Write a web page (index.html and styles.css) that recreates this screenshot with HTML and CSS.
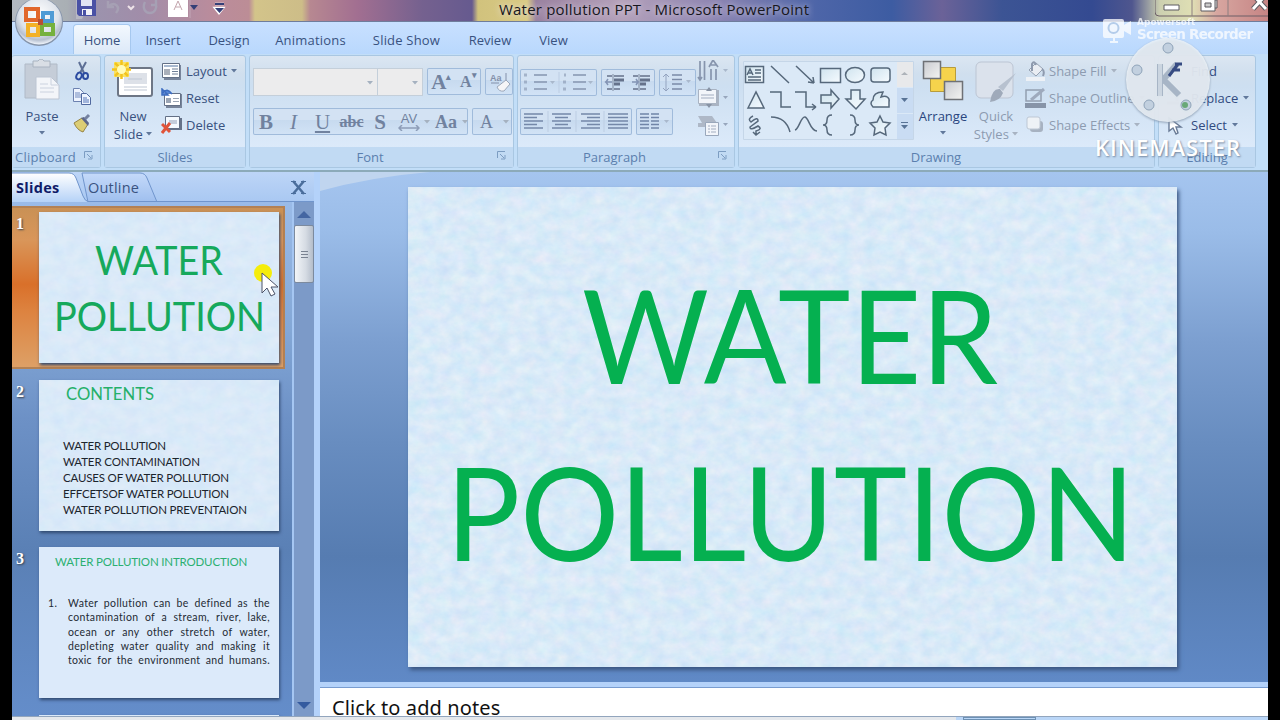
FILE: index.html
```
<!DOCTYPE html>
<html lang="en">
<head>
    <meta charset="UTF-8">
    <meta name="viewport" content="width=device-width, initial-scale=1.0">
    <title>Water pollution PPT - Microsoft PowerPoint</title>
    <link rel="stylesheet" href="styles.css">
</head>
<body>
    <!-- Shared gradients, icons and the paper texture -->
    <svg class="defs" width="0" height="0">
        <defs>
            <filter id="paper" x="0" y="0" width="100%" height="100%" color-interpolation-filters="sRGB">
                <feTurbulence type="fractalNoise" baseFrequency="0.07 0.09" numOctaves="5" seed="8"/>
                <feColorMatrix values="0.15 0 0 0 0.775  0.05 0.05 0 0 0.867  0 0 0.03 0 0.957  0 0 0 0 1"/>
            </filter>
            <linearGradient id="grey" x1="0" y1="0" x2="1" y2="1">
                <stop offset="0" stop-color="#c9cbd0"/><stop offset="1" stop-color="#f4f4f2"/>
            </linearGradient>
            <linearGradient id="shape" x1="0" y1="0" x2="1" y2="1">
                <stop offset="0" stop-color="#cfe3ee"/><stop offset="1" stop-color="#f6fbff"/>
            </linearGradient>
            <radialGradient id="orb" cx="50%" cy="35%" r="65%">
                <stop offset="0" stop-color="#fff"/><stop offset="0.65" stop-color="#dde2ea"/><stop offset="0.85" stop-color="#b6c0d0"/><stop offset="1" stop-color="#f2f6fc"/>
            </radialGradient>
            <symbol id="caret" viewBox="0 0 6 4"><path d="M0 0h6L3 3.6z"/></symbol>
            <symbol id="launcher" viewBox="0 0 9 9">
                <path d="M.5 7V.5H8M3 3l4 4M8 4v4H4" fill="none" stroke="#7c9dc2"/>
            </symbol>
        </defs>
    </svg>

    <div class="window">
        <!-- Title bar with quick access toolbar -->
        <header class="titlebar">
            <svg class="quick-access" width="160" height="22" viewBox="0 0 160 22">
                <path d="M0 0h6c4 7 3 13 0 19H0z" fill="#c5c6cf" opacity=".6"/>
                <path d="M1 0h19v16H3l-2-2z" fill="#4a51a5"/><path d="M5 0h11v6H5z" fill="#e2e4f4"/><path d="M6 9h10v6H6z" fill="#f2f2f8"/><path d="M7 10h3v5H7z" fill="#4a51a5"/>
                <path d="M32 1v6h6M33 6c6-5 12 1 7 7" fill="none" stroke="#a6a0b4" stroke-width="2.4"/>
                <path d="M52 6l3 3 3-3" fill="none" stroke="#eee3e8" stroke-width="2"/>
                <path d="M80 0v5h-5M69 2c-3 6 0 11 5 11s7-5 6-9" fill="none" stroke="#a6a0b4" stroke-width="2.4"/>
                <path d="M92 0h20v17H92z" fill="#fff"/><path d="M98 10l4-9 4 9M99.500 7h5" fill="none" stroke="#c3a5ad"/>
                <path d="M114 0v18" stroke="#d9ccd6" opacity=".4"/><path d="M114 5h8l-4 5z" fill="#343f77"/>
                <path d="M139 4h9M139 8h8l-4 5z" stroke="#fff" stroke-width="2.500"/><path d="M139 4h9" stroke="#343f77" stroke-width="2"/><path d="M139 8h9l-4.500 5z" fill="#343f77"/>
            </svg>
            <h1 class="title">Water pollution PPT - Microsoft PowerPoint</h1>
            <svg class="window-buttons" width="113" height="22" viewBox="0 0 113 22">
                <path d="M0 0v12q0 4 4 4h109" fill="none" stroke="#6d5f66"/><path d="M37 0v16M73 0v16" stroke="#8d7f80"/>
                <path d="M9 5h15v5H9z" fill="#fff" stroke="#5d5a60"/>
                <path d="M50 0h12v8H50z" fill="#ddd" stroke="#5d5a60"/><path d="M46 -2h14v13H46z" fill="#fff" stroke="#5d5a60"/><path d="M50 3h6v4h-6z" fill="#ccc" stroke="#5d5a60"/>
                <path d="M99 -4l12 13M110 -4l-12 13" stroke="#5d5a60" stroke-width="5"/><path d="M99 -4l12 13M110 -4l-12 13" stroke="#fff" stroke-width="3"/>
            </svg>
        </header>

        <!-- Ribbon tabs -->
        <nav class="tabs">
            <a class="tab active">Home</a>
            <a class="tab insert">Insert</a>
            <a class="tab design">Design</a>
            <a class="tab animations">Animations</a>
            <a class="tab show">Slide Show</a>
            <a class="tab review">Review</a>
            <a class="tab view">View</a>
        </nav>

        <!-- Ribbon groups -->
        <section class="ribbon">
            <div class="group clipboard">
                <div class="group-body">
                    <div class="big-button">
                        <svg width="38" height="44" viewBox="0 0 38 44"><path d="M2 5h32v34H2z" fill="#c5cdd8" stroke="#b0bac7"/><path d="M10 2h5q3-4 6 0h6v6H10z" fill="#d9dee5" stroke="#a9b3c0"/><path d="M13 18h15l8 8v14H13z" fill="#f3f5f9" stroke="#bcc5d3"/><path d="M28 18v8h8M17 25h8M17 29h14M17 33h14" fill="none" stroke="#cbd2df"/></svg>
                        <span>Paste</span>
                        <svg class="caret"><use href="#caret"/></svg>
                    </div>
                    <div class="icon-column">
                        <svg width="20" height="20" viewBox="0 0 20 20"><path d="M7 1l5 11M14 1L8 12" stroke="#5d6f95" stroke-width="2"/><ellipse cx="7" cy="15" rx="2.500" ry="3.500" transform="rotate(25 7 15)" fill="none" stroke="#2c4ba0" stroke-width="2"/><ellipse cx="13.500" cy="15" rx="2.500" ry="3" fill="none" stroke="#2c4ba0" stroke-width="2"/></svg>
                        <svg width="20" height="20" viewBox="0 0 20 20"><path d="M1.500 1.500h6l4 4v9h-10z" fill="#eef4ff" stroke="#6d82b0"/><path d="M3 6h5M3 8h6M3 10h6" stroke="#7089bd"/><path d="M9.500 6.500h5l4 4v7h-9z" fill="#eef4ff" stroke="#51699f"/><path d="M11 11h4M11 13h6M11 15h6" stroke="#5677b9"/></svg>
                        <svg width="20" height="20" viewBox="0 0 20 20"><path d="M2 10l8-5 6 6-5 8q-6-2-9-9z" fill="#dccd74" stroke="#968343"/><path d="M9 5l3-1 5 6-1 3z" fill="#5d6688"/><path d="M13 6l4-4" stroke="#7481a0" stroke-width="3"/></svg>
                    </div>
                </div>
                <div class="group-label">Clipboard<svg class="launcher"><use href="#launcher"/></svg></div>
            </div>

            <div class="group slides">
                <div class="group-body">
                    <div class="big-button">
                        <svg width="44" height="44" viewBox="0 0 44 44"><rect x="7" y="9" width="34" height="28" rx="2" fill="#fff" stroke="#6d7685" stroke-width="2"/><path d="M13 14h23v11H13z" fill="#dde1e8"/><path d="M17 20h14M13 28h23M13 31h23" stroke="#bfc7d3"/><path d="M3 3h15v15H3z" fill="#f9e264"/><path d="M10.500 1v19M1 10.500h19M4 4l13 13M17 4L4 17" stroke="#f3c41e" stroke-width="2.500"/><circle cx="10.500" cy="10.500" r="4.500" fill="#fffbb8"/></svg>
                        <span>New</span>
                        <span>Slide <svg class="caret"><use href="#caret"/></svg></span>
                    </div>
                    <div class="row-buttons">
                        <div><svg width="21" height="20" viewBox="0 0 21 20"><path d="M3 4h17v15H3z" fill="#77849a"/><path d="M1.500 2.500h17v14h-17z" fill="#fff" stroke="#637086"/><path d="M3 4h14v2H3z" fill="#a8b9d0"/><path d="M3 8h6v6H3z" fill="#aab0ba"/><path d="M11 8h6M11 10.500h6M11 13h6" stroke="#708097"/></svg>Layout <svg class="caret"><use href="#caret"/></svg></div>
                        <div><svg width="21" height="20" viewBox="0 0 21 20"><path d="M5 6h16v14H5z" fill="#77849a"/><path d="M3.500 5.500h16v12h-16z" fill="#fff" stroke="#637086"/><path d="M5 10h5v5H5zM12 10h6v1h-6zM12 13h6v1h-6z" fill="#9aa5b5"/><path d="M1 1v6h6zM2 5q4-6 9 1" fill="#5587d8" stroke="#3c6cc0" stroke-width="1.500"/></svg>Reset</div>
                        <div><svg width="21" height="20" viewBox="0 0 21 20"><path d="M5 3h16v12H5z" fill="#657289"/><path d="M4.500 1.500h14v12h-14z" fill="#f5faff" stroke="#637086"/><path d="M8 5h8v4H8z" fill="#c4cddb"/><path d="M1 9l8 8M9 8l-8 10" stroke="#e0543a" stroke-width="3"/></svg>Delete</div>
                    </div>
                </div>
                <div class="group-label">Slides</div>
            </div>

            <div class="group font">
                <div class="group-body stacked">
                    <div class="tool-row">
                        <div class="combo name"><svg class="caret dim"><use href="#caret"/></svg></div><div class="combo size"><svg class="caret dim"><use href="#caret"/></svg></div>
                        <div class="tools grow"><b class="large">A<sup>▴</sup></b><b class="small">A<sup>▾</sup></b></div>
                        <div class="tools clear"><svg width="26" height="24" viewBox="0 0 26 24"><text x="4" y="11" class="clear-text">Aa</text><path d="M20 3v8M5 13h8" stroke="#8390aa"/><path d="M11 17l9-7 4 4-6 7q-5 1-7-4z" fill="#f5f5f7" stroke="#9ba7ba"/></svg></div>
                    </div>
                    <div class="tool-row">
                        <div class="tools styles"><b>B</b><i>I</i><u>U</u><s>abc</s><b>S</b><span class="av">AV<svg width="22" height="6" viewBox="0 0 22 6"><path d="M1 3h20M4 0L1 3l3 3M18 0l3 3-3 3" fill="none" stroke="#8d9db8" stroke-width="1.500"/></svg></span><svg class="caret dim"><use href="#caret"/></svg><b class="aa">Aa</b><svg class="caret dim"><use href="#caret"/></svg></div>
                        <div class="tools color"><span>A</span><svg class="caret dim"><use href="#caret"/></svg></div>
                    </div>
                </div>
                <div class="group-label">Font<svg class="launcher"><use href="#launcher"/></svg></div>
            </div>

            <div class="group paragraph">
                <div class="group-body">
                    <div class="stacked">
                        <div class="tool-row">
                            <svg class="tools" width="77" height="27" viewBox="0 0 77 27"><path d="M14 6h13M14 13h13M14 20h13M53 6h13M53 13h13M53 20h13" stroke="#8595b0" stroke-width="1.400"/><path d="M4 6h3M4 13h3M4 20h3M44 6h2M43 13h3M43 20h3" stroke="#8595b0" stroke-width="3" opacity=".6"/><path d="M39 3v21" stroke="#bccde3"/><path d="M30 12h5l-2.500 3zM68 12h5l-2.500 3z" fill="#a9b8cc"/></svg>
                            <svg class="tools" width="54" height="27" viewBox="0 0 54 27"><path d="M6 7h5M13 7h10M13 11h10M6 20h5M13 20h6M32 7h5M39 7h10M39 11h10M32 20h5M39 20h6" stroke="#65728b" stroke-width="1.500"/><path d="M13 11h10M13 15h6M39 11h10M39 15h6" stroke="#65728b" stroke-width="3"/><path d="M12 5v17M38 5v17" stroke="#7c899e"/><path d="M11 13H5l2-3M11 13H5l2 3M31 13h6l-2-3M31 13h6l-2 3" fill="none" stroke="#8394b4" stroke-width="1.500"/></svg>
                            <svg class="tools" width="37" height="27" viewBox="0 0 37 27"><path d="M13 6h10M13 10.500h10M13 15h10M13 20h10" stroke="#7b8ba8" stroke-width="1.400"/><path d="M7 5v17M4 8l3-3 3 3M4 19l3 3 3-3" fill="none" stroke="#93a3bf"/><path d="M27 11h5l-2.500 3z" fill="#a9b8cc"/></svg>
                        </div>
                        <div class="tool-row">
                            <svg class="tools" width="112" height="27" viewBox="0 0 112 27"><path d="M4 6h19M4 9.500h13M4 13h19M4 16.500h13M4 20h19M32 6h19M35 9.500h13M32 13h19M35 16.500h13M32 20h19M61 6h19M67 9.500h13M61 13h19M67 16.500h13M61 20h19M88 6h20M88 9.500h20M88 13h20M88 16.500h20M88 20h20" stroke="#7488a9" stroke-width="1.500"/><path d="M28 3v21M56 3v21M84 3v21" stroke="#bccde3"/></svg>
                            <svg class="tools" width="37" height="27" viewBox="0 0 37 27"><path d="M4 6h9M15 6h8M4 9.500h9M15 9.500h8M4 13h9M15 13h8M4 16.500h9M15 16.500h8M4 20h9M15 20h8" stroke="#7085a8" stroke-width="1.500"/><path d="M28 12h5l-2.500 3z" fill="#a9b8cc"/></svg>
                        </div>
                    </div>
                    <div class="icon-column">
                        <svg width="32" height="22" viewBox="0 0 32 22"><path d="M3 1v19M7.500 1v19M1 17l2 3 2-3M12 7l4-7 5 7M14 5h5M14 9v11M19 9v11" fill="none" stroke="#8795ad" stroke-width="1.700"/><path d="M26 9h5l-2.500 3z" fill="#a9b8cc"/></svg>
                        <svg width="32" height="22" viewBox="0 0 32 22"><path d="M2 3h20v16H2z" fill="#aab4c3"/><path d="M1.500 2.500h18v14h-18z" fill="#f2f5fa" stroke="#a9b3c2"/><path d="M4 8h13M4 11h13" stroke="#a2adc0"/><path d="M12 0l3 4H9zM12 21l3-4H9z" fill="#8793a5"/><path d="M26 9h5l-2.500 3z" fill="#97a6bc"/></svg>
                        <svg width="32" height="22" viewBox="0 0 32 22"><path d="M1 2h14l5 7H5zM1 9h8v4H1z" fill="#aeb8c7"/><path d="M8.500 8.500h13v13h-13z" fill="#f2f5fa" stroke="#99a7bb"/><path d="M11 12h2M14 12h5M11 15h2M14 15h5M11 18h2M14 18h5" stroke="#a2adc0"/><path d="M26 9h5l-2.500 3z" fill="#97a6bc"/></svg>
                    </div>
                </div>
                <div class="group-label">Paragraph<svg class="launcher"><use href="#launcher"/></svg></div>
            </div>

            <div class="group drawing">
                <div class="group-body">
                    <!-- Shape gallery: three rows of six, with its scroll buttons -->
                    <svg class="gallery" width="171" height="79" viewBox="0 0 171 79">
                        <path d="M.5.5h170v78H.5z" fill="#dbe9f7" stroke="#c5d6e8"/>
                        <g fill="url(#shape)" stroke="#56687b" stroke-width="1.500">
                            <path d="M2.500 5.500h18v16h-18z"/><path d="M4 14l3-6 3 6M5 12h4M12 9h6M12 12h6M5 16h13M5 19h13"/>
                            <path d="M28 5l18 17M53 5l18 17M71 22l-1-6M71 22l-6-1" fill="none"/>
                            <path d="M77.500 7.500h20v14h-20z"/><ellipse cx="112" cy="14" rx="9.500" ry="7.500"/><rect x="128" y="7" width="19" height="14" rx="3"/>
                            <path d="M5 47l8-16 8 16z"/><path d="M27 31h11v15h10M52 31h11v15h9M73 46l-4-3M73 46l-4 3" fill="none"/>
                            <path d="M78 34h10v-5l8 9-8 9v-5H78zM108 29h9v9h5l-9 10-10-10h5z"/><path d="M130 39c0-6 4-8 10-8l-2 5c6-2 9 1 8 5v5h-16q-4-4 0-7z"/>
                            <path d="M10 55q-6 3-2 6 7-6 7-1l-8 6q0 4 8-1 5 3-2 5v4M10 71l3 3 4-3M28 56q15 0 19 15M52 69c4-1 6-14 10-13s5 14 12 14M89 54q-5 0-5 5 0 5-4 5 4 0 4 5t5 5M107 54q5 0 5 5 0 5 4 5-4 0-4 5t-5 5" fill="none"/>
                            <path d="M137 55l3 6 7 1-5 5 1 7-6-3-6 3 1-7-5-5 7-1z"/>
                        </g>
                        <path d="M154 1h16v25h-16z" fill="#e8e9eb"/><path d="M154 27h16v25h-16zM154 53h16v25h-16z" fill="#c9dcf3"/>
                        <path d="M158 14h7l-3.500-3z" fill="#aeb3ba"/><path d="M158 37h7l-3.500 4zM158 64h7l-3.500 4zM158 61h7v1h-7z" fill="#587396"/>
                    </svg>
                    <div class="big-button arrange">
                        <svg width="42" height="44" viewBox="0 0 42 44"><path d="M8.500 8.500h25v24h-25z" fill="#f6d34c" stroke="#b89c3b"/><path d="M1.500 2.500h17v17h-17z" fill="url(#grey)" stroke="#6e7176" stroke-width="1.500"/><path d="M22.500 22.500h18v18h-18z" fill="url(#grey)" stroke="#6e7176" stroke-width="1.500"/></svg>
                        <span>Arrange</span>
                        <svg class="caret"><use href="#caret"/></svg>
                    </div>
                    <div class="big-button quick disabled">
                        <svg width="42" height="44" viewBox="0 0 42 44"><rect x="1" y="3" width="37" height="36" rx="5" fill="#dbe2ec" stroke="#bcc5d3"/><path d="M41 14L28 32l-5-4z" fill="#b7c1cf"/><path d="M15 43q2-14 10-13l3 4q-3 8-13 9z" fill="#9faaba"/></svg>
                        <span>Quick</span>
                        <span>Styles <svg class="caret"><use href="#caret"/></svg></span>
                    </div>
                    <div class="row-buttons disabled">
                        <div><svg width="22" height="20" viewBox="0 0 22 20"><path d="M2 16h19v4H2z" fill="#edf1f6"/><path d="M5 9l7-7 7 6-7 7z" fill="#e9edf3" stroke="#95a1b2"/><path d="M8 10V3q2-4 4 1M18 8q3 2 1 7" fill="none" stroke="#8e9aae" stroke-width="2"/></svg>Shape Fill <svg class="caret"><use href="#caret"/></svg></div>
                        <div><svg width="22" height="20" viewBox="0 0 22 20"><path d="M1 15h21v5H1z" fill="#8794a8"/><path d="M2 2h15v11H2z" fill="none" stroke="#929eb0" stroke-width="1.500"/><path d="M7 12L20 1" stroke="#9eaabd" stroke-width="3"/></svg>Shape Outline <svg class="caret"><use href="#caret"/></svg></div>
                        <div><svg width="22" height="20" viewBox="0 0 22 20"><rect x="6" y="6" width="13" height="11" rx="3" fill="#a7b2c1"/><rect x="3" y="2" width="13" height="12" rx="2" fill="#eef2f6" stroke="#bdc7d4"/></svg>Shape Effects <svg class="caret"><use href="#caret"/></svg></div>
                    </div>
                </div>
                <div class="group-label">Drawing</div>
            </div>

            <div class="group editing">
                <div class="group-body">
                    <div class="row-buttons">
                        <div><svg width="28" height="20" viewBox="0 0 28 20"><path d="M7 17L16 3" stroke="#2d4d91" stroke-width="5"/><path d="M8 8h12" stroke="#526da7" stroke-width="3"/></svg>Find</div>
                        <div><svg width="28" height="20" viewBox="0 0 28 20"><path d="M8 5h7M8 15h12M18 4v9" stroke="#a9b6c9" stroke-width="3"/></svg>Replace <svg class="caret"><use href="#caret"/></svg></div>
                        <div><svg width="28" height="20" viewBox="0 0 28 20"><path d="M10 3v13l4-3 3 6 2-1-2-6h5z" fill="#fff" stroke="#697b96" stroke-width="1.400"/></svg>Select <svg class="caret"><use href="#caret"/></svg></div>
                    </div>
                </div>
                <div class="group-label">Editing</div>
            </div>
        </section>

        <main class="workspace">
            <!-- Slides pane -->
            <aside class="pane">
                <div class="pane-tabs">
                    <svg class="pane-shape" width="302" height="30" viewBox="0 0 302 30"><defs><linearGradient id="tabFill" x2="0" y2="1"><stop offset="0" stop-color="#c5dafa"/><stop offset="1" stop-color="#9fbfee"/></linearGradient><linearGradient id="activeFill" x2="0" y2="1"><stop offset="0" stop-color="#fff"/><stop offset="1" stop-color="#b5d2f7"/></linearGradient></defs><path d="M70 1h58q5 0 7 5l10 24H76z" fill="url(#tabFill)" stroke="#7095cc"/><path d="M0 1h57q5 0 7 5l7 18q2 5 5 6H0z" fill="url(#activeFill)"/><path d="M0 1h57q5 0 7 5l7 18q2 5 5 5.500h226" fill="none" stroke="#7095cc"/></svg>
                    <b>Slides</b><span>Outline</span>
                    <svg class="close" width="15" height="15" viewBox="0 0 15 15"><path d="M2 1l11 13M13 1L2 14" stroke="#4a6d9b" stroke-width="2.500"/><path d="M0 1.500h5M10 1.500h5M0 13.500h5M10 13.500h5" stroke="#4a6d9b"/></svg>
                </div>
                <div class="pane-body">
                    <div class="slide-list">
                        <div class="slide-item selected">
                            <span class="number">1</span>
                            <svg class="thumb" viewBox="0 0 240 151"><rect width="240" height="151" filter="url(#paper)" opacity=".5"/><g class="heading"><text x="56" y="63" textLength="128" lengthAdjust="spacingAndGlyphs">WATER</text><text x="15" y="119" textLength="211" lengthAdjust="spacingAndGlyphs">POLLUTION</text></g></svg>
                        </div>
                        <div class="slide-item">
                            <span class="number">2</span>
                            <svg class="thumb" viewBox="0 0 240 151"><rect width="240" height="151" filter="url(#paper)" opacity=".5"/><text class="contents-title" x="27" y="20" textLength="88" lengthAdjust="spacingAndGlyphs">CONTENTS</text><g class="contents"><text x="24" y="70" textLength="103">WATER POLLUTION</text><text x="24" y="86" textLength="137">WATER CONTAMINATION</text><text x="24" y="102" textLength="166">CAUSES OF WATER POLLUTION</text><text x="24" y="118" textLength="166">EFFCETSOF WATER POLLUTION</text><text x="24" y="134" textLength="184">WATER POLLUTION PREVENTAION</text></g></svg>
                        </div>
                        <div class="slide-item">
                            <span class="number">3</span>
                            <div class="thumb intro">
                                <h2>WATER POLLUTION INTRODUCTION</h2>
                                <div class="intro-text">
                                    <span>1.</span>
                                    <p>Water pollution can be defined as the<br>contamination of a stream, river, lake,<br>ocean or any other stretch of water,<br>depleting water quality and making it<br>toxic for the environment and humans.</p>
                                </div>
                            </div>
                        </div>
                        <div class="slide-item"><span class="number"></span><div class="thumb"></div></div>
                    </div>
                    <div class="scrollbar">
                        <svg width="14" height="8" viewBox="0 0 14 8"><path d="M0 8l7-7 7 7z" fill="#4466a2"/></svg>
                        <div class="scroll-thumb"><i></i><i></i><i></i></div>
                        <svg class="down" width="14" height="8" viewBox="0 0 14 8"><path d="M0 0l7 7 7-7z" fill="#345b9f"/></svg>
                    </div>
                </div>
            </aside>

            <!-- Slide editor with notes below -->
            <section class="editor">
                <div class="stage">
                    <svg class="glare" width="110" height="20" viewBox="0 0 110 20"><path d="M0 0h110Q50 5 0 19z" fill="#c0d5ef"/></svg>
                    <svg class="slide" viewBox="0 0 769 480"><rect width="769" height="480" filter="url(#paper)"/><g class="heading"><text x="174" y="197" textLength="416" lengthAdjust="spacingAndGlyphs">WATER</text><text x="38" y="374" textLength="689" lengthAdjust="spacingAndGlyphs">POLLUTION</text></g></svg>
                </div>
                <div class="notes">Click to add notes</div>
            </section>
        </main>
        <footer class="status"><span></span><i></i></footer>

        <!-- Office button -->
        <svg class="office" width="50" height="48" viewBox="0 0 50 48">
            <circle cx="25" cy="22" r="24" fill="#8594aa"/><circle cx="25" cy="21.500" r="23" fill="url(#orb)"/>
            <g fill="none" stroke-width="4">
                <path d="M12 9h12v11H12z" stroke="#e1672c"/><path d="M29 13h9v8h-9z" stroke="#4f9bd5"/>
                <path d="M14 25h10v10H14z" stroke="#f3b127"/><path d="M28 25h11v9H28z" stroke="#75b13e"/>
            </g>
            <path d="M24 19h5v6h-5z" fill="#b94f35"/>
        </svg>

        <!-- Pointer with click highlight -->
        <svg class="pointer" width="30" height="38" viewBox="0 0 30 38"><circle cx="11" cy="10" r="9" fill="#f5ed0b"/><path d="M10 10v20l5-5 4 8 4-2-4-7h7z" fill="#fff" stroke="#4b5268"/></svg>

        <!-- Recorder watermark -->
        <div class="recorder">
            <svg width="29" height="25" viewBox="0 0 29 25"><path d="M2 1h17q2 0 2 2v4l7-4v14l-7-4v5q0 2-2 2H2q-2 0-2-2V3q0-2 2-2z" fill="#fff"/><circle cx="10.500" cy="10" r="5" fill="none" stroke="#afc7e4" stroke-width="2"/><path d="M7 24h8M11 20v4" stroke="#fff" stroke-width="2"/></svg>
            <p><small>Apowersoft</small>Screen Recorder</p>
        </div>

        <!-- Editor watermark -->
        <div class="kinemaster">
            <svg width="86" height="84" viewBox="0 0 86 84"><circle cx="43" cy="42" r="42" fill="#f3f7fb" opacity=".8"/><g fill="#c2d0df" stroke="#8fa3b9"><circle cx="43" cy="10" r="5"/><circle cx="12" cy="32" r="5"/><circle cx="24" cy="67" r="5"/><circle cx="61" cy="67" r="5"/></g><circle cx="60" cy="67" r="3" fill="#69a878"/><path d="M35 26v32M36 44l16-18M39 42l15 15" stroke="#a7b5c6" stroke-width="6" fill="none"/><path d="M35 26v32" stroke="#cbd5e0" stroke-width="4"/><path d="M44 38l9-12M50 26h7M47 32h8" stroke="#364b82" stroke-width="3"/></svg>
            <span>KINEMASTER</span>
        </div>
    </div>
</body>
</html>
```
FILE: styles.css
```
/* Reset */
* {
    margin: 0;
    padding: 0;
    box-sizing: border-box;
}

body {
    width: 1280px;
    height: 720px;
    padding: 0 12px;
    background: #000;
    overflow: hidden;
    font-family: "Open Sans", "Noto Sans", sans-serif;
    font-size: 13px;
    color: #39527f;
}

svg {
    display: block;
    flex-shrink: 0;
}

.defs {
    position: absolute;
}

.window {
    position: relative;
    width: 1256px;
    height: 720px;
    overflow: hidden;
    background: #bfdbff;
    display: flex;
    flex-direction: column;
}

/* Title bar: blurred glass over the desktop wallpaper */
.titlebar {
    height: 22px;
    padding-left: 64px;
    display: flex;
    border-bottom: 1px solid #6f7d9c;
    background: linear-gradient(90deg, #b3b9c1 0, #a9afb4 55px, #9b94ae 75px, #a18da9 130px, #ba8c9c 200px, #bc8d96 237px, #d3c48a 243px, #cdbd88 290px, #b78891 298px, #a26f91 345px, #75618f 410px, #665a8f 460px, #d1c27d 466px, #d9ca84 515px, #9a82a0 524px, #b4a1ba 610px, #8f86b2 700px, #4d65a8 805px, #3d5ca2 880px, #6b6298 930px, #3c5494 990px, #344a91 1080px, #4f568e 1120px, #cdd0b0 1148px, #dfdfb4 1180px, #d7a6a0 1205px, #c68484 1256px);
}

.title {
    flex: 1;
    margin-left: 263px;
    font-size: 15px;
    font-weight: 400;
    line-height: 18px;
    letter-spacing: 0.2px;
    color: #17171d;
    white-space: nowrap;
    text-shadow: 0 0 6px #e8e2ef;
}

/* Ribbon tabs */
.tabs {
    height: 32px;
    padding-left: 61px;
    display: flex;
    align-items: flex-end;
    background: linear-gradient(#c8e0ff, #b9d8fd);
}

.tab {
    width: 62px;
    height: 30px;
    line-height: 32px;
    text-align: center;
    white-space: nowrap;
}

.tab.active {
    width: 58px;
    line-height: 31px;
    background: linear-gradient(#f3f8fe, #dce9f8);
    border: 1px solid #a6c8ef;
    border-bottom: 0;
    border-radius: 4px 4px 0 0;
}

.tab.insert { width: 64px; }
.tab.design { width: 68px; }
.tab.animations { width: 95px; letter-spacing: 0.2px; }
.tab.show { width: 97px; letter-spacing: 0.2px; }
.tab.review { width: 70px; }
.tab.view { width: 57px; }

/* Ribbon */
.ribbon {
    height: 118px;
    padding: 1px 0 2px;
    display: flex;
    gap: 3px;
    background: #c2def8;
    border-bottom: 2px solid #8caab9;
}

.group {
    height: 113px;
    display: flex;
    flex-direction: column;
    border: 1px solid #a9c7e2;
    border-radius: 3px;
    background: linear-gradient(#dbe6f2 0, #d0dfee 18px, #cddff1 30px, #dceafa 92px);
}

.clipboard { width: 89px; border-left: 0; }
.slides { width: 142px; }
.font { width: 265px; }
.paragraph { width: 218px; }
.drawing { width: 417px; }
.editing { width: 98px; }

.group-body {
    height: 91px;
    padding-top: 1px;
    display: flex;
}

.group-label {
    height: 20px;
    position: relative;
    line-height: 21px;
    text-align: center;
    background: #c1daf3;
    color: #5b7fae;
}

.clipboard .group-label {
    padding-right: 21px;
    letter-spacing: 0.2px;
}

.paragraph .group-label {
    padding-right: 23px;
}

.drawing .group-label {
    padding-right: 21px;
}

.font .group-label {
    padding-right: 23px;
}

.launcher {
    position: absolute;
    right: 7px;
    top: 4px;
    width: 9px;
    height: 9px;
}

.caret {
    display: inline-block;
    width: 6px;
    height: 4px;
    fill: #61789b;
    vertical-align: 3px;
}

.caret.dim {
    fill: #a5b1c0;
}

.big-button {
    width: 60px;
    display: flex;
    flex-direction: column;
    align-items: center;
    line-height: 18px;
    padding-top: 2px;
    white-space: nowrap;
}

.big-button > span {
    padding-top: 4px;
    margin-bottom: -4px;
}

.big-button > .caret {
    margin-top: 10px;
}

.icon-column {
    display: flex;
    flex-direction: column;
    gap: 6px;
    padding-top: 4px;
}

.row-buttons > div {
    height: 27px;
    display: flex;
    align-items: center;
    gap: 4px;
    white-space: nowrap;
}

.disabled {
    color: #8d9bb0;
}

.disabled .caret {
    fill: #a8b3c2;
}

.slides .big-button {
    width: 56px;
}

/* Font group */
.stacked {
    display: flex;
    flex-direction: column;
    padding-top: 11px;
    gap: 12px;
}

.font .stacked {
    padding: 12px 0 0 3px;
    gap: 13px;
}

.tool-row {
    display: flex;
    gap: 4px;
    height: 27px;
}

.combo {
    height: 28px;
    padding: 12px 4px 0 0;
    text-align: right;
    line-height: 4px;
    border: 1px solid #c4cfda;
    background: #ececed;
}

.combo.name { width: 125px; margin-right: -5px; }
.combo.size { width: 46px; }

.tools {
    display: flex;
    align-items: center;
    height: 27px;
    box-shadow: inset 0 0 0 1px #a0bbdb;
    border-radius: 2px;
    font-family: "Liberation Serif", serif;
    font-size: 21px;
    line-height: 24px;
    color: #71829f;
    background: linear-gradient(#d3e2f3 45%, #c7daef 45%, #d2e3f6);
}

svg.tools {
    display: block;
}

.tools.grow { width: 54px; justify-content: space-around; }
.tools.clear { width: 28px; padding-left: 1px; }
.tools.color { width: 40px; padding-left: 8px; gap: 10px; font-size: 18px; }

.tools sup {
    font-size: 9px;
    line-height: 1px;
    vertical-align: 9px;
}

.tools .small {
    font-size: 16px;
}

.clear-text {
    font: bold 9px "Liberation Sans", sans-serif;
    fill: #8390aa;
}

.tools.styles {
    width: 215px;
    display: grid;
    grid-template-columns: 26px 29px 29px 29px 28px 30px 6px 32px 5px;
    justify-items: center;
}

.tools.styles s {
    font-size: 16px;
    font-weight: bold;
}

.tools.styles .caret {
    align-self: center;
}

.tools .av {
    font: 13px/13px "Liberation Sans", sans-serif;
    text-align: center;
}

.tools .aa {
    font-size: 18px;
}

/* Paragraph group */
.paragraph .group-body {
    padding-left: 2px;
}

.paragraph .stacked {
    width: 177px;
    padding-top: 12px;
}

.paragraph .icon-column {
    padding-top: 3px;
    gap: 5px;
}

/* Drawing group */
.drawing .group-body {
    padding-left: 4px;
}

.gallery {
    margin-top: 4px;
}

.arrange {
    width: 57px;
    padding-left: 1px;
}

.arrange span {
    color: #29457e;
}

.quick {
    width: 50px;
}

.drawing .row-buttons > div {
    gap: 3px;
}

.drawing .row-buttons {
    padding-left: 3px;
}

.drawing .row-buttons svg:last-child,
.editing .row-buttons .caret {
    margin-left: 1px;
}

.editing .row-buttons {
    color: #314b80;
}

/* Work area */
.workspace {
    height: 544px;
    display: flex;
    background: #b4d2fa;
}

.pane {
    width: 302px;
    display: flex;
    flex-direction: column;
}

.pane-tabs {
    height: 30px;
    position: relative;
    display: flex;
    align-items: center;
    padding-top: 1px;
    background: linear-gradient(#bdd5f7, #a9c8f2);
}

.pane-shape {
    position: absolute;
    left: 0;
    top: 0;
}

.pane-tabs b,
.pane-tabs span,
.pane-tabs .close {
    position: relative;
}

.pane-tabs b {
    width: 76px;
    padding-left: 4px;
    color: #101b68;
    font-size: 14.5px;
    letter-spacing: 0.3px;
}

.pane-tabs span {
    flex: 1;
    font-size: 14.5px;
    letter-spacing: 0.2px;
}

.pane-tabs .close {
    margin-right: 8px;
}

.pane-body {
    flex: 1;
    display: flex;
    overflow: hidden;
    background: linear-gradient(#9abbe8, #83a7d6 25%, #6d91c6 42%, #5a80b5 68%, #648dca);
}

.slide-list {
    flex: 1;
    padding-top: 4px;
}

.slide-item {
    width: 273px;
    height: 163px;
    margin-bottom: 4.5px;
    padding-top: 6px;
    display: flex;
}

.slide-item.selected {
    background: linear-gradient(#c99155, #d9965a 20%, #d9702a 48%, #dd8340 65%, #dda066);
    border: solid #b38153;
    border-width: 2px 2px 2px 0;
    padding-top: 4px;
}

.number {
    width: 27px;
    padding: 3px 0 0 4px;
    font: bold 16px "Liberation Serif", serif;
    color: #fff;
    text-shadow: 1px 1px 2px #39404b;
}

.thumb {
    width: 240px;
    height: 151px;
    flex-shrink: 0;
    background: #dceafa;
    box-shadow: 1px 2px 3px #30496f;
}

/* Slide text */
.heading {
    font-family: Lato, sans-serif;
    font-size: 129px;
    fill: #05b050;
}

.thumb .heading {
    font-size: 41px;
    fill: #16a95c;
}

.contents-title {
    font: 17px Lato, sans-serif;
    fill: #24b06a;
}

.contents {
    font: 11.5px Lato, sans-serif;
    fill: #1c242c;
}

.intro {
    padding: 8px 9px 0 16px;
    font-family: Lato, sans-serif;
}

.intro h2 {
    font-size: 11.5px;
    font-weight: 400;
    line-height: 14px;
    color: #2bb071;
    white-space: nowrap;
    letter-spacing: -0.17px;
}

.intro-text {
    display: flex;
    margin: 27px 0 0 -7px;
    font-size: 10.5px;
    letter-spacing: 0.35px;
    line-height: 14.3px;
    color: #242b34;
}

.intro-text span {
    width: 20px;
}

.intro-text p {
    width: 202px;
    text-align: justify;
    text-align-last: justify;
    white-space: nowrap;
}

/* Slides pane scrollbar */
.scrollbar {
    width: 22px;
    display: flex;
    flex-direction: column;
    align-items: center;
    padding: 8px 0 1px;
    border-left: 2px solid #a5c6f2;
    background: #7c9ac8;
}

.scroll-thumb {
    width: 20px;
    height: 58px;
    margin-top: 7px;
    display: flex;
    flex-direction: column;
    align-items: center;
    justify-content: center;
    gap: 2px;
    border: 1px solid #7c8a9e;
    border-radius: 2px;
    background: linear-gradient(90deg, #f2f5f8, #d5dbe3 60%, #b4bdca);
}

.scroll-thumb i {
    width: 7px;
    height: 1px;
    background: #798291;
}

.scrollbar .down {
    margin-top: auto;
    margin-bottom: 5px;
}

/* Editor */
.editor {
    flex: 1;
    margin-left: 6px;
    display: flex;
    flex-direction: column;
}

.stage {
    position: relative;
    height: 510px;
    padding: 15px 0 0 88px;
    background: linear-gradient(#a5c5ef 0, #9abce8 60px, #7c9fd0 170px, #688dc0 270px, #567cb1 385px, #6089c6 510px);
}

.glare {
    position: absolute;
    left: 0;
    top: 0;
}

.slide {
    width: 769px;
    height: 480px;
    background: #dcecfa;
    box-shadow: 2px 3px 4px #3b5680;
}

.notes {
    height: 29px;
    margin-top: 5px;
    padding: 6px 0 0 12px;
    border-top: 1px solid #789cd0;
    background: #fff;
    color: #111;
    font-family: "Noto Sans", sans-serif;
    font-size: 20px;
    line-height: 28px;
    letter-spacing: 0.1px;
}

.status {
    height: 4px;
    display: flex;
    background: #bad6f7;
    border-top: 1px solid #92a5bd;
}

.status span {
    width: 944px;
    background: #e5e8ec;
}

.status i {
    width: 73px;
    margin-left: 7px;
    border: 1px solid #6d91b4;
}

/* Overlays */
.office {
    position: absolute;
    left: 2px;
    top: 0;
}

.pointer {
    position: absolute;
    left: 240px;
    top: 263px;
}

.recorder {
    position: absolute;
    left: 1091px;
    top: 18px;
    display: flex;
    gap: 5px;
    color: #fff;
    opacity: 0.75;
}

.recorder p {
    font: bold 13.5px/14px "DejaVu Sans", sans-serif;
    letter-spacing: -0.7px;
    white-space: nowrap;
}

.recorder small {
    display: block;
    font-size: 9px;
    line-height: 9px;
    letter-spacing: 0;
}

.kinemaster {
    position: absolute;
    left: 1082px;
    top: 38px;
    width: 148px;
    display: flex;
    flex-direction: column;
    align-items: center;
}

.kinemaster svg {
    filter: drop-shadow(0 1px 1px #8293a8);
}

.kinemaster span {
    margin-top: 12px;
    font: 600 22px/26px "Open Sans", sans-serif;
    letter-spacing: 1px;
    color: #fff;
    text-shadow: 1px 1px 2px #73869f;
}
```
